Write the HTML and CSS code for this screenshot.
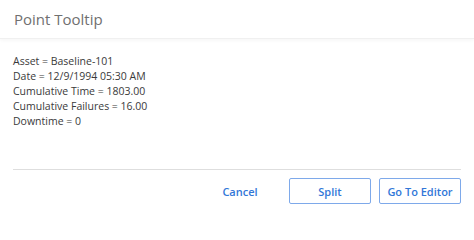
FILE: index.html
```html
<!DOCTYPE html>
<html>
<head>
<meta charset="utf-8">
<link rel="stylesheet" href="styles.css">
</head>
<body>
<div class="dialog">
  <div class="header">
    <div class="title">Point Tooltip</div>
  </div>
  <div class="content">
    <div class="line">Asset = Baseline-101</div>
    <div class="line">Date = 12/9/1994 05:30 AM</div>
    <div class="line">Cumulative Time = 1803.00</div>
    <div class="line">Cumulative Failures = 16.00</div>
    <div class="line">Downtime = 0</div>
  </div>
  <div class="footer">
    <button class="btn btn-link">Cancel</button>
    <button class="btn btn-outline">Split</button>
    <button class="btn btn-outline">Go To Editor</button>
  </div>
</div>
</body>
</html>
```

FILE: styles.css
```css
html, body {
  margin: 0;
  padding: 0;
  background: #ffffff;
}
.dialog {
  width: 474px;
  height: 235px;
  font-family: "Open Sans", "Liberation Sans", sans-serif;
  display: flex;
  flex-direction: column;
}
.header {
  height: 39px;
  border-bottom: 1px solid #f0f0f0;
  box-shadow: 0 2px 3px rgba(0, 0, 0, 0.03);
  display: flex;
  align-items: center;
  padding-left: 14px;
  box-sizing: border-box;
}
.title {
  font-size: 15px;
  color: #707070;
  margin-top: -1px;
}
.content {
  padding: 15px 13px 0 13px;
  height: 115px;
  box-sizing: border-box;
}
.line {
  font-size: 10.5px;
  line-height: 15px;
  color: #3a3a3a;
}
.footer {
  margin: 15px 13px 0 13px;
  border-top: 1px solid #dedede;
  padding-top: 8px;
  display: flex;
  justify-content: flex-end;
  gap: 8px;
}
.btn {
  width: 82px;
  height: 26px;
  font-family: "Open Sans", "Liberation Sans", sans-serif;
  font-size: 11px;
  font-weight: 600;
  color: #3277d8;
  background: #ffffff;
  border-radius: 2px;
  padding: 0;
  cursor: pointer;
}
.btn-link {
  border: 1px solid transparent;
}
.btn-outline {
  border: 1px solid #7ea9ea;
}
```
